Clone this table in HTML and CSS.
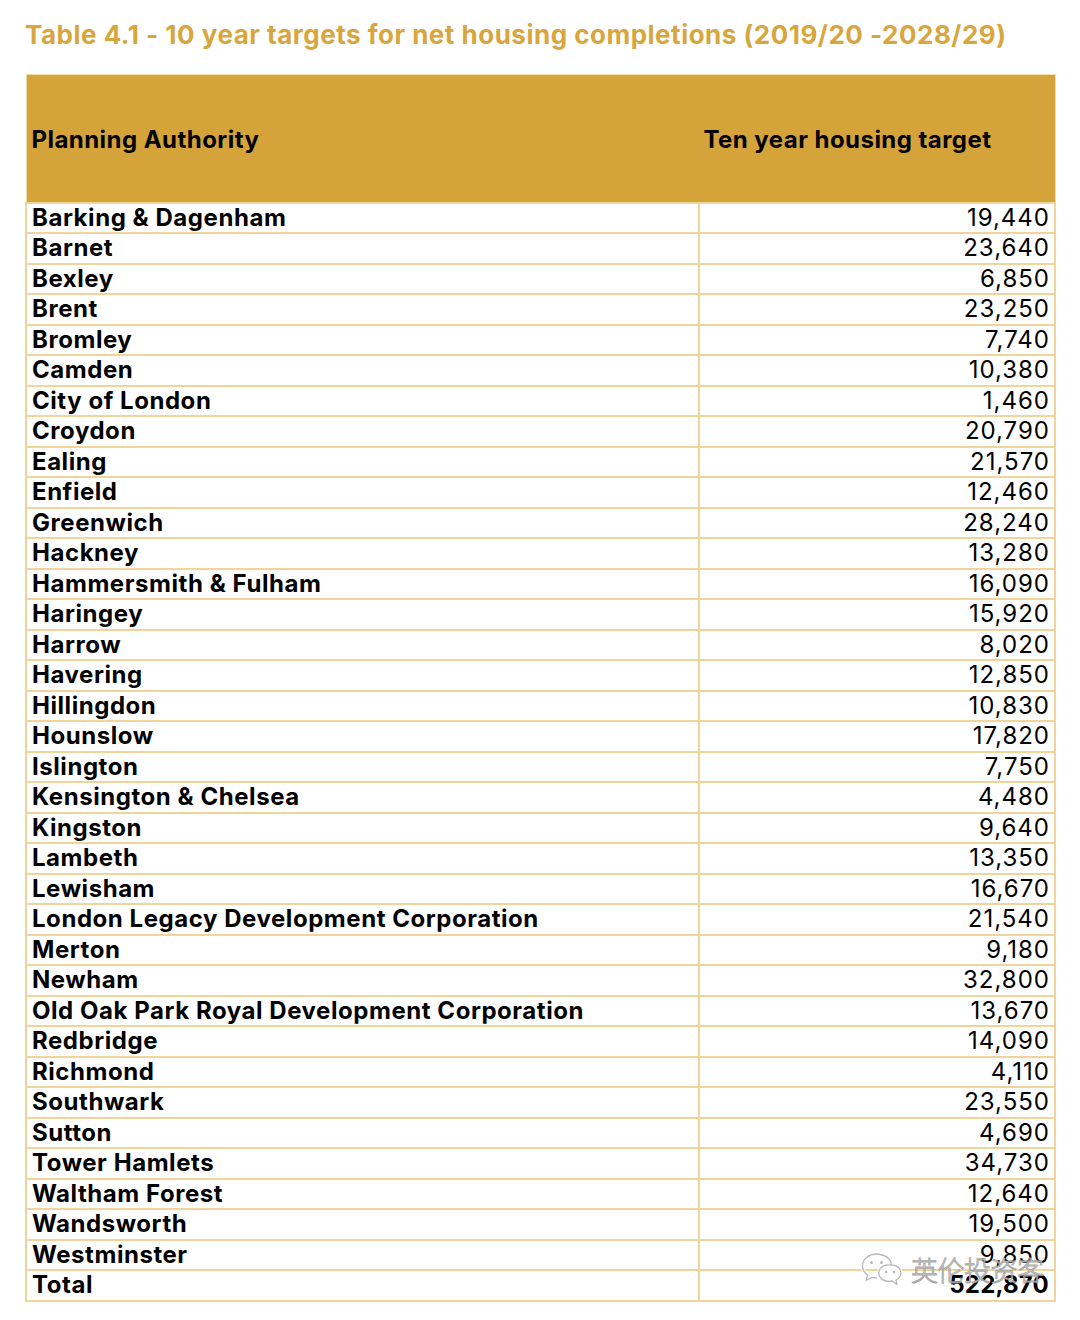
FILE: index.html
```html
<!DOCTYPE html>
<html lang="en">
<head>
<meta charset="utf-8">
<title>Table 4.1</title>
<link rel="stylesheet" href="styles.css">
</head>
<body>
<div class="page">
  <h1 class="title">Table 4.1 - 10 year targets for net housing completions (2019/20 -2028/29)</h1>
  <div class="table-wrap">
    <table class="targets">
      <thead>
        <tr class="head-row">
          <th class="col-name">Planning Authority</th>
          <th class="col-target">Ten year housing target</th>
        </tr>
      </thead>
      <tbody>
        <tr><td class="name">Barking &amp; Dagenham</td><td class="num">19,440</td></tr>
        <tr><td class="name">Barnet</td><td class="num">23,640</td></tr>
        <tr><td class="name">Bexley</td><td class="num">6,850</td></tr>
        <tr><td class="name">Brent</td><td class="num">23,250</td></tr>
        <tr><td class="name">Bromley</td><td class="num">7,740</td></tr>
        <tr><td class="name">Camden</td><td class="num">10,380</td></tr>
        <tr><td class="name">City of London</td><td class="num">1,460</td></tr>
        <tr><td class="name">Croydon</td><td class="num">20,790</td></tr>
        <tr><td class="name">Ealing</td><td class="num">21,570</td></tr>
        <tr><td class="name">Enfield</td><td class="num">12,460</td></tr>
        <tr><td class="name">Greenwich</td><td class="num">28,240</td></tr>
        <tr><td class="name">Hackney</td><td class="num">13,280</td></tr>
        <tr><td class="name">Hammersmith &amp; Fulham</td><td class="num">16,090</td></tr>
        <tr><td class="name">Haringey</td><td class="num">15,920</td></tr>
        <tr><td class="name">Harrow</td><td class="num">8,020</td></tr>
        <tr><td class="name">Havering</td><td class="num">12,850</td></tr>
        <tr><td class="name">Hillingdon</td><td class="num">10,830</td></tr>
        <tr><td class="name">Hounslow</td><td class="num">17,820</td></tr>
        <tr><td class="name">Islington</td><td class="num">7,750</td></tr>
        <tr><td class="name">Kensington &amp; Chelsea</td><td class="num">4,480</td></tr>
        <tr><td class="name">Kingston</td><td class="num">9,640</td></tr>
        <tr><td class="name">Lambeth</td><td class="num">13,350</td></tr>
        <tr><td class="name">Lewisham</td><td class="num">16,670</td></tr>
        <tr><td class="name">London Legacy Development Corporation</td><td class="num">21,540</td></tr>
        <tr><td class="name">Merton</td><td class="num">9,180</td></tr>
        <tr><td class="name">Newham</td><td class="num">32,800</td></tr>
        <tr><td class="name">Old Oak Park Royal Development Corporation</td><td class="num">13,670</td></tr>
        <tr><td class="name">Redbridge</td><td class="num">14,090</td></tr>
        <tr><td class="name">Richmond</td><td class="num">4,110</td></tr>
        <tr><td class="name">Southwark</td><td class="num">23,550</td></tr>
        <tr><td class="name">Sutton</td><td class="num">4,690</td></tr>
        <tr><td class="name">Tower Hamlets</td><td class="num">34,730</td></tr>
        <tr><td class="name">Waltham Forest</td><td class="num">12,640</td></tr>
        <tr><td class="name">Wandsworth</td><td class="num">19,500</td></tr>
        <tr><td class="name">Westminster</td><td class="num">9,850</td></tr>
        <tr class="total"><td class="name">Total</td><td class="num">522,870</td></tr>
      </tbody>
    </table>
    <div class="watermark">
      <svg class="wm-icon" viewBox="0 0 44 36" width="44" height="36" aria-hidden="true">
        <path d="M16 2 C7.5 2 1.5 7.5 1.5 14 C1.5 17.8 3.5 21 6.5 23.2 L5 28.5 L11 25.4 C12.6 25.9 14.2 26.1 16 26.1" fill="none" stroke="#ffffff" stroke-width="3.2" stroke-linejoin="round"/>
        <path d="M16 2 C7.5 2 1.5 7.5 1.5 14 C1.5 17.8 3.5 21 6.5 23.2 L5 28.5 L11 25.4 C12.6 25.9 14.2 26.1 16 26.1" fill="none" stroke="#b9b9b9" stroke-width="1.3" stroke-linejoin="round"/>
        <path d="M30.5 13 C24.5 12.5 20 14.5 18.5 18 C16.5 22.5 19 27.5 25 29 C27 29.5 29 29.5 31 29 L36 32.5 L35 28 C38.5 26 40.5 22.5 39.5 19 C39 16 36 13.5 30.5 13 Z" fill="#ffffff" stroke="#ffffff" stroke-width="3.2" stroke-linejoin="round"/>
        <path d="M30.5 13 C24.5 12.5 20 14.5 18.5 18 C16.5 22.5 19 27.5 25 29 C27 29.5 29 29.5 31 29 L36 32.5 L35 28 C38.5 26 40.5 22.5 39.5 19 C39 16 36 13.5 30.5 13 Z" fill="none" stroke="#b9b9b9" stroke-width="1.3" stroke-linejoin="round"/>
        <path d="M30.5 13 C30 7 24.5 3 16 2" fill="none" stroke="#b9b9b9" stroke-width="1.3"/>
        <circle cx="10.5" cy="10.5" r="1.5" fill="#b9b9b9"/>
        <circle cx="20.5" cy="10.5" r="1.5" fill="#b9b9b9"/>
        <circle cx="25" cy="20" r="1.3" fill="#b9b9b9"/>
        <circle cx="33" cy="20" r="1.3" fill="#b9b9b9"/>
      </svg>
      <span class="wm-text">英伦投资客</span>
    </div>
  </div>
</div>
</body>
</html>
```

FILE: styles.css
```css
html, body {
  margin: 0;
  padding: 0;
  background: #ffffff;
}

.page {
  padding: 18px 24px 0 25px;
  font-family: Inter, "Liberation Sans", Arial, sans-serif;
  color: #000;
}

.title {
  margin: 0 0 22px 0;
  font-size: 26px;
  line-height: 34px;
  font-weight: 700;
  color: #d8a63e;
  letter-spacing: 0.5px;
  white-space: nowrap;
}

.table-wrap {
  position: relative;
  width: 1031px;
}

.targets {
  width: 1031px;
  border-collapse: collapse;
  table-layout: fixed;
}

.head-row {
  background: #d4a33a;
  height: 128px;
}

.head-row th {
  text-align: left;
  font-size: 24px;
  font-weight: 700;
  letter-spacing: 0.45px;
  padding: 2px 5px 0 5px;
  vertical-align: middle;
  border-top: 1px solid #f2dcae;
  border-bottom: 1px solid #f2dcae;
}

.head-row .col-name {
  width: 662px;
  border-left: 1px solid #f2dcae;
}

.head-row .col-target {
  border-right: 1px solid #f2dcae;
}

.targets td {
  height: 28.5px;
  padding: 0 4px 0 5px;
  font-size: 24px;
  line-height: 28.5px;
  border: 2px solid #f0d49a;
  white-space: nowrap;
  overflow: visible;
}

.targets td.name {
  font-weight: 700;
  letter-spacing: 0.55px;
}

.targets td.num {
  text-align: right;
  font-weight: 400;
  letter-spacing: 1px;
}

.targets tr.total td {
  font-weight: 700;
}

.targets tr.total td.num {
  letter-spacing: 0.2px;
  padding-right: 5px;
}

.watermark {
  position: absolute;
  left: 836px;
  top: 1176px;
  display: flex;
  align-items: center;
  gap: 6px;
  pointer-events: none;
}

.wm-text {
  font-family: "Noto Sans CJK SC", sans-serif;
  font-size: 27px;
  font-weight: 300;
  color: rgba(235, 235, 235, 0.75);
  -webkit-text-stroke: 0.9px rgba(150, 150, 150, 0.85);
  letter-spacing: -0.5px;
}
```
